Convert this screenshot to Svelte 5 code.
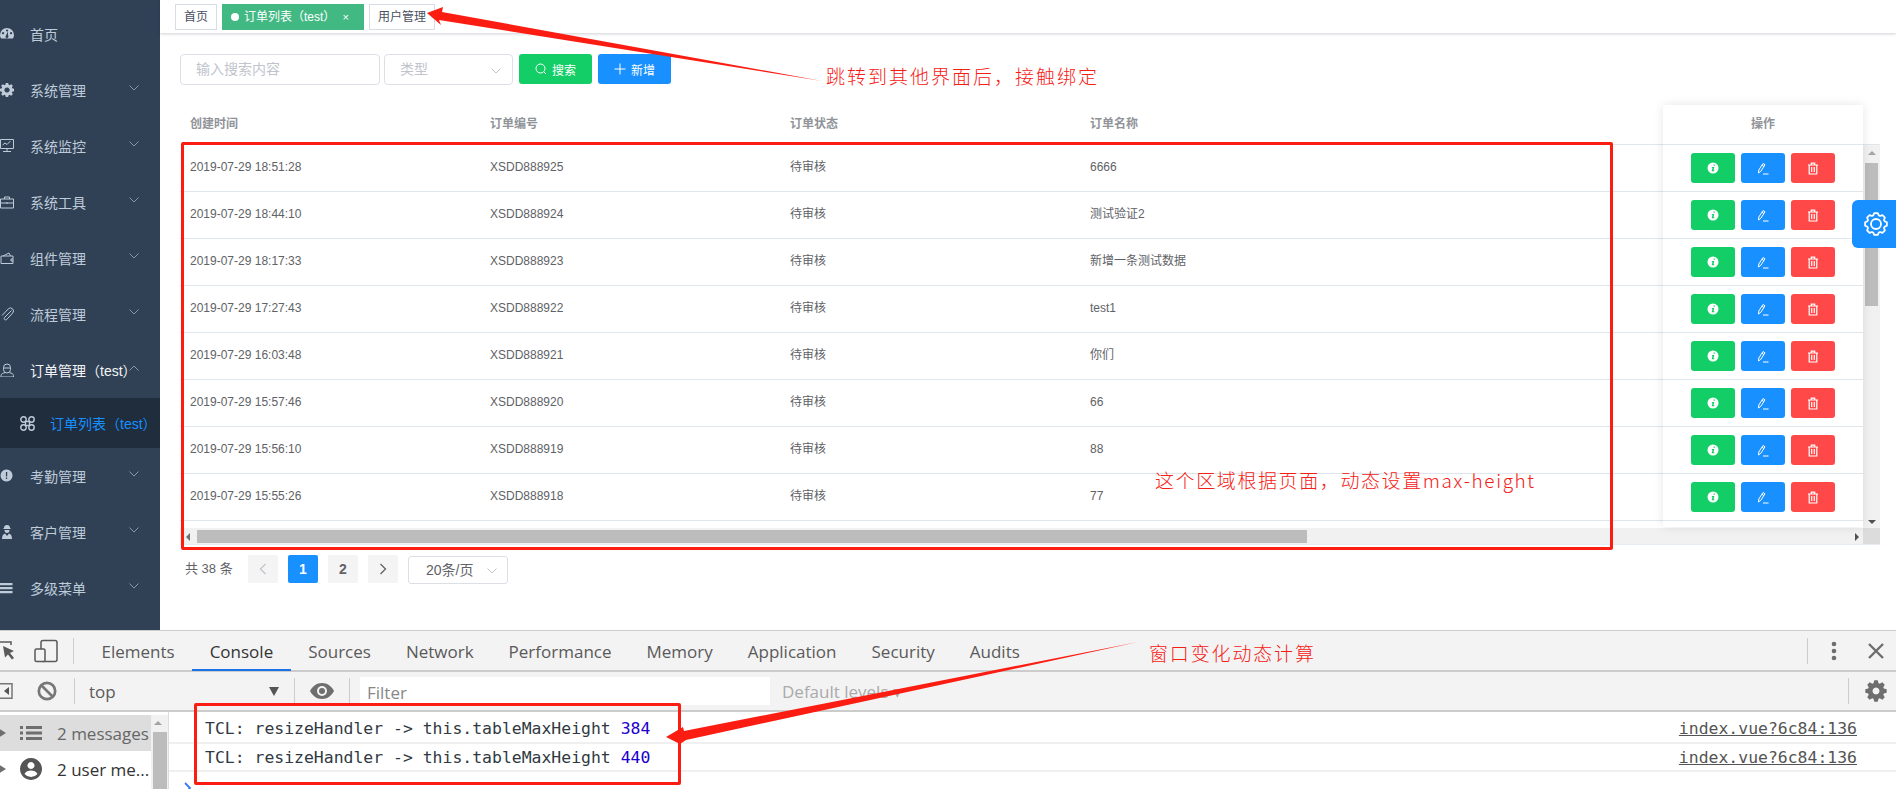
<script lang="ts">
  // Teeth are built from polar points, so one helper covers all three gears.
  function gear(cx: number, cy: number, outer: number, inner: number, teeth: number): string {
    const pts: string[] = [];
    const step = (Math.PI * 2) / teeth;
    for (let i = 0; i < teeth; i++) {
      const a = i * step - step / 2;
      for (const [off, r] of [[0.1, inner], [0.3, outer], [0.7, outer], [0.9, inner]]) {
        const t = a + off * step;
        pts.push(`${(cx + Math.cos(t) * r).toFixed(2)} ${(cy + Math.sin(t) * r).toFixed(2)}`);
      }
    }
    return "M" + pts.join("L") + "Z";
  }

  const menu = [
    { label: "首页", icon: "dash", solid: true, arrow: false },
    { label: "系统管理", icon: "gear", solid: true, arrow: true },
    { label: "系统监控", icon: "monitor", solid: false, arrow: true },
    { label: "系统工具", icon: "case", solid: false, arrow: true },
    { label: "组件管理", icon: "wallet", solid: false, arrow: true },
    { label: "流程管理", icon: "clip", solid: false, arrow: true },
    { label: "订单管理（test）", icon: "person", solid: false, arrow: true, open: true },
    { label: "考勤管理", icon: "alert", solid: true, arrow: true },
    { label: "客户管理", icon: "agent", solid: true, arrow: true },
    { label: "多级菜单", icon: "bars", solid: true, arrow: true }
  ];

  const icons: Record<string, string> = {
    dash: "M0 8a7 7 0 1 1 14 0c0 1.500-.5 2.500-1.200 3.500H1.200C.5 10.500 0 9.500 0 8ZM3 5a1.100 1.100 0 1 0 .1 0ZM7 2.400a1.100 1.100 0 1 0 .1 0ZM11 5a1.100 1.100 0 1 0 .1 0ZM7.800 4.500 6 8.500a1.500 1.500 0 1 0 2.200.3Z",
    gear: gear(7, 7, 7.2, 5.4, 8) + "M7 4.400a2.600 2.600 0 1 0 .01 0Z",
    monitor: "M.5 .5h13v9H.5ZM7 9.500v2.500M3 12.500h8M2.500 6l2.500-2 2 1.500L10.500 2",
    case: "M.5 4h13v9H.5ZM4.500 4V2h5v2M.5 8h13M7 7v2",
    wallet: "M1 5h12v7.500H1ZM3 5l6-3 1.500 3M13 8h-2v2h2",
    clip: "M11.500 3.500 4.500 10.500a1.500 1.500 0 0 0 2.100 2.100l6-6.500a3 3 0 0 0-4.300-4.200L2 8.500",
    person: "M7 1a3.500 3.500 0 0 1 3.500 3.500v2a3.500 3.500 0 0 1-7 0v-2A3.500 3.500 0 0 1 7 1ZM3.500 5h7M1 14v-1.500c0-1.500 2-2.500 4-2.800M13.500 14v-1.500c0-1.500-2-2.500-4-2.800M1 14h12.500",
    alert: "M6.500.5a6 6 0 1 0 .01 0ZM5.900 3h1.300v4.500H5.900ZM5.900 8.600h1.300v1.300H5.900Z",
    agent: "M7 0c2 0 3 1 3 3l1 1H3l1-1c0-2 1-3 3-3ZM4.500 5h5c0 2-1 3-2.500 3S4.500 7 4.500 5ZM2 14c0-3 1-5 3-5.500L7 11l2-2.500c2 .5 3 2.500 3 5.500Z",
    bars: "M0 2h12.500v2.200H0ZM0 6h12.500v2.200H0ZM0 10h12.500v2.200H0Z"
  };

  const rows = [
    ["2019-07-29 18:51:28", "XSDD888925", "待审核", "6666"],
    ["2019-07-29 18:44:10", "XSDD888924", "待审核", "测试验证2"],
    ["2019-07-29 18:17:33", "XSDD888923", "待审核", "新增一条测试数据"],
    ["2019-07-29 17:27:43", "XSDD888922", "待审核", "test1"],
    ["2019-07-29 16:03:48", "XSDD888921", "待审核", "你们"],
    ["2019-07-29 15:57:46", "XSDD888920", "待审核", "66"],
    ["2019-07-29 15:56:10", "XSDD888919", "待审核", "88"],
    ["2019-07-29 15:55:26", "XSDD888918", "待审核", "77"]
  ];

  const devTabs = ["Elements", "Console", "Sources", "Network", "Performance", "Memory", "Application", "Security", "Audits"];
  const logs = [384, 440];
</script>

{#snippet chevron(up: boolean)}
  <svg class="chev" class:up width="10" height="6" viewBox="0 0 10 6"><path d="M.5.5 5 5 9.500.5" /></svg>
{/snippet}

<div class="page">
  <div class="top">
    <aside class="sidebar">
      {#each menu as item}
        <div class="item" class:open={item.open}>
          <svg class="micon" class:solid={item.solid} width="14" height="14" viewBox="0 0 14 14"><path d={icons[item.icon]} /></svg>
          <span class="label">{item.label}</span>
          {#if item.arrow}{@render chevron(!!item.open)}{/if}
        </div>
        {#if item.open}
          <div class="sub">
            <svg class="droneicon" width="15" height="15" viewBox="0 0 15 15">
              <circle cx="3.500" cy="3.500" r="2.700" />
              <circle cx="11.500" cy="3.500" r="2.700" />
              <circle cx="3.500" cy="11.500" r="2.700" />
              <circle cx="11.500" cy="11.500" r="2.700" />
              <rect x="5.500" y="5.500" width="4" height="4" />
            </svg>
            <span>订单列表（test）</span>
          </div>
        {/if}
      {/each}
    </aside>

    <main>
      <header class="tabs">
        <span class="tab">首页</span>
        <span class="tab active"><i class="dot"></i>订单列表（test）<b class="x">×</b></span>
        <span class="tab">用户管理</span>
      </header>

      <div class="filters">
        <div class="input search">输入搜索内容</div>
        <div class="input kind">类型 {@render chevron(false)}</div>
        <button class="btn green">
          <svg width="12" height="12" viewBox="0 0 12 12"><circle cx="5.500" cy="5.500" r="4.500" /><path d="m9 9 2 2" /></svg>
          搜索
        </button>
        <button class="btn blue">
          <svg width="12" height="12" viewBox="0 0 12 12"><path d="M6 .5v11M.5 6h11" /></svg>
          新增
        </button>
      </div>

      <section class="table">
        <div class="head">
          <span>创建时间</span><span>订单编号</span><span>订单状态</span><span>订单名称</span>
        </div>
        <div class="body">
          {#each rows as r}
            <div class="row">
              {#each r as cell}<span>{cell}</span>{/each}
            </div>
          {/each}
        </div>
        <div class="hbar">
          <i class="tri left"></i>
          <div class="hthumb"></div>
          <i class="tri right"></i>
          <div class="corner"></div>
        </div>

        <div class="vbar">
          <i class="tri up"></i>
          <div class="vthumb"></div>
          <i class="tri down"></i>
        </div>

        <div class="fixed">
          <div class="fhead">操作</div>
          {#each rows as _}
            <div class="frow">
              <button class="act green" aria-label="详情">
                <svg width="12" height="12" viewBox="0 0 12 12">
                  <circle cx="6" cy="6" r="5.500" fill="#fff" />
                  <path d="M6.600 2.400h1.200v1.300H6.600ZM5 5h2.300l-.8 3.300h.9l-.2.900H4.700l.8-3.300h-.7Z" fill="#13ce66" />
                </svg>
              </button>
              <button class="act blue" aria-label="编辑">
                <svg width="12" height="13" viewBox="0 0 12 13" fill="none" stroke="#fff" stroke-width="1">
                  <path d="M1.500 11 1.800 8 6 1.500l2 1.300L3.800 9.300ZM5 3.300l2 1.300M6 12h5.500" />
                </svg>
              </button>
              <button class="act red" aria-label="删除">
                <svg width="12" height="13" viewBox="0 0 12 13" fill="none" stroke="#fff" stroke-width="1.200">
                  <path d="M1 3h10M4.300 3V1.200h3.400V3M2.200 3v9h7.600V3M4.700 5v5M7.300 5v5" />
                </svg>
              </button>
            </div>
          {/each}
        </div>
      </section>

      <nav class="pager">
        <span class="total">共 38 条</span>
        <button class="pg off" aria-label="上一页"><svg width="8" height="12" viewBox="0 0 8 12"><path d="M6.500 1 1.500 6l5 5" /></svg></button>
        <button class="pg on">1</button>
        <button class="pg">2</button>
        <button class="pg" aria-label="下一页"><svg width="8" height="12" viewBox="0 0 8 12"><path d="m1.500 1 5 5-5 5" /></svg></button>
        <div class="size">20条/页 {@render chevron(false)}</div>
      </nav>

      <button class="settings" aria-label="设置">
        <svg width="26" height="26" viewBox="0 0 26 26" fill="none" stroke="#fff" stroke-width="1.800" stroke-linejoin="round">
          <path d={gear(13, 13, 11, 9, 8)} />
          <circle cx="13" cy="13" r="5" />
        </svg>
      </button>
    </main>
  </div>

  <div class="devtools">
    <div class="dtabs">
      <svg class="dt-inspect" width="58" height="26" viewBox="0 0 58 26" fill="none" stroke="#5a5a5a">
        <path d="M-2 4h13v3M-2 17h2" stroke-width="1.500" />
        <path d="M3 8l11 5-4 2 4 5-2 1.500-4-5-3 3Z" fill="#5a5a5a" stroke="none" />
        <rect x="41" y="2.500" width="16" height="21" rx="2" stroke-width="1.500" />
        <rect x="35" y="11" width="10" height="12.500" rx="1.500" fill="#f3f3f3" stroke-width="1.500" />
      </svg>
      <i class="sep"></i>
      {#each devTabs as t}
        <span class="dtab" class:cur={t === "Console"}>{t}</span>
      {/each}
      <i class="sep far"></i>
      <svg class="dots" width="6" height="20" viewBox="0 0 6 20" fill="#6e6e6e"><circle cx="3" cy="3" r="2.300" /><circle cx="3" cy="10" r="2.300" /><circle cx="3" cy="17" r="2.300" /></svg>
      <svg class="close" width="16" height="16" viewBox="0 0 16 16" stroke="#6e6e6e" stroke-width="2.400"><path d="m1 1 14 14M15 1 1 15" /></svg>
    </div>
    <div class="dbar">
      <svg width="13" height="16" viewBox="0 0 13 16" class="panel"><path d="M-1 .8h13v14.400H-1" fill="none" stroke="#777" stroke-width="1.500" /><path d="M9 4v8L4 8Z" fill="#555" /></svg>
      <svg class="block" width="20" height="20" viewBox="0 0 20 20" fill="none" stroke="#777" stroke-width="2.700"><circle cx="10" cy="10" r="8.200" /><path d="m4.500 4.500 11 11" /></svg>
      <i class="sep"></i>
      <span class="ctx">top</span>
      <i class="caret"></i>
      <i class="sep"></i>
      <svg class="eye" width="24" height="16" viewBox="0 0 24 16"><path d="M12 0C6.500 0 2.500 3.500 0 8c2.500 4.500 6.500 8 12 8s9.500-3.500 12-8c-2.500-4.500-6.500-8-12-8Z" fill="#6e6e6e" /><circle cx="12" cy="8" r="5" fill="#f3f3f3" /><circle cx="12" cy="8" r="3" fill="#6e6e6e" /></svg>
      <i class="sep"></i>
      <div class="filter">Filter</div>
      <span class="levels">Default levels ▾</span>
      <i class="sep far"></i>
      <svg class="dgear" width="22" height="22" viewBox="0 0 22 22"><path d={gear(11, 11, 10.800, 8.200, 8) + "M11 7.500a3.500 3.500 0 1 0 .01 0Z"} fill="#6e6e6e" fill-rule="evenodd" /></svg>
    </div>
    <div class="cons">
      <div class="side">
        <div class="sitems">
          <div class="sitem hl">
            <i class="play"></i>
            <svg width="22" height="14" viewBox="0 0 22 14" fill="#6e6e6e"><path d="M0 0h3v3H0ZM6 0h16v3H6ZM0 5.500h3v3H0ZM6 5.500h16v3H6ZM0 11h3v3H0ZM6 11h16v3H6Z" /></svg>
            <span class="grey">2 messages</span>
          </div>
          <div class="sitem">
            <i class="play"></i>
            <svg width="22" height="22" viewBox="0 0 22 22" fill="#555"><path fill-rule="evenodd" d="M11 0a11 11 0 1 0 .01 0ZM11 4a3.500 3.500 0 1 1-.01 0ZM4.500 16c1-2.500 4-3.500 6.500-3.500s5.500 1 6.500 3.500a8.500 8.500 0 0 1-13 0Z" /></svg>
            <span>2 user me...</span>
          </div>
        </div>
        <div class="sscroll"><i class="tri up small"></i><div class="sthumb"></div></div>
      </div>
      <div class="log">
        {#each logs as n}
          <div class="line">
            <span>TCL: resizeHandler -> this.tableMaxHeight <em>{n}</em></span>
            <u>index.vue?6c84:136</u>
          </div>
        {/each}
        <svg class="prompt" width="8" height="12" viewBox="0 0 8 12" fill="none" stroke="#367cf1" stroke-width="1.800"><path d="m1 1 5 5-5 5" /></svg>
      </div>
    </div>
  </div>

  <!-- red annotations drawn over the screenshot -->
  <div class="mark tablebox"></div>
  <div class="mark logbox"></div>
  <svg class="arrows" width="1896" height="789" viewBox="0 0 1896 789" fill="#fb1d12">
    <polygon points="427,13 443,7 442,12 822,81 439,20 441,25" />
    <polygon points="666,737 683,727 684,731 1138,642 686,740 680,744" />
  </svg>
  <span class="note n1">跳转到其他界面后，接触绑定</span>
  <span class="note n2">这个区域根据页面，动态设置max-height</span>
  <span class="note n3">窗口变化动态计算</span>
</div>

<style>
  :global(body) {
    margin: 0;
    background: #fff;
  }
  .page {
    position: relative;
    width: 1896px;
    height: 789px;
    overflow: hidden;
    display: flex;
    flex-direction: column;
    font-family: "Liberation Sans", "Noto Sans CJK SC", sans-serif;
  }
  .top {
    height: 630px;
    display: flex;
  }
  button {
    font-family: inherit;
    border: none;
    padding: 0;
  }

  .sidebar {
    width: 160px;
    flex: none;
    padding-top: 6px;
    background: #304156;
    box-sizing: border-box;
  }
  .item {
    height: 56px;
    display: flex;
    align-items: center;
    font-size: 14px;
    color: #bfcbd9;
    position: relative;
    white-space: nowrap;
  }
  .item.open {
    color: #f4f4f5;
  }
  .micon {
    flex: none;
    margin-right: 16px;
    fill: none;
    stroke: #bfcbd9;
    stroke-width: 1;
  }
  .micon.solid {
    fill: #bfcbd9;
    fill-rule: evenodd;
    stroke: none;
  }
  .label {
    width: 100px;
  }
  .chev {
    fill: none;
    stroke: #8c96a3;
    stroke-width: 1;
    flex: none;
  }
  .chev.up {
    transform: rotate(180deg);
  }
  .item .chev {
    position: absolute;
    left: 129px;
    top: 23px;
  }
  .sub {
    height: 50px;
    display: flex;
    align-items: center;
    padding-left: 20px;
    background: #1f2d3d;
    color: #1890ff;
    font-size: 14px;
    white-space: nowrap;
    gap: 15px;
  }
  .droneicon {
    fill: none;
    stroke: #bfcbd9;
    stroke-width: 1.400;
    flex: none;
  }

  main {
    flex: 1;
    min-width: 0;
    position: relative;
  }
  .tabs {
    height: 33px;
    box-sizing: border-box;
    padding: 4px 0 0 15px;
    display: flex;
    gap: 5px;
    align-items: flex-start;
    box-shadow: 0 1px 3px rgba(0, 21, 41, 0.2);
  }
  .tab {
    height: 26px;
    box-sizing: border-box;
    border: 1px solid #d8dce5;
    padding: 0 8px;
    font-size: 12px;
    line-height: 24px;
    color: #495060;
    display: flex;
    align-items: center;
  }
  .tab.active {
    background: #42b983;
    border-color: #42b983;
    color: #fff;
    width: 142px;
  }
  .dot {
    width: 8px;
    height: 8px;
    border-radius: 50%;
    background: #fff;
    margin-right: 5px;
  }
  .x {
    font-weight: normal;
    font-size: 11px;
    margin-left: auto;
    margin-right: 6px;
  }

  .filters {
    margin: 21px 0 20px 20px;
    display: flex;
    align-items: flex-start;
    gap: 6px;
    height: 31px;
  }
  .input {
    height: 31px;
    box-sizing: border-box;
    border: 1px solid #dcdfe6;
    border-radius: 4px;
    font-size: 14px;
    line-height: 29px;
    color: #c0c4cc;
    padding-left: 15px;
  }
  .search {
    width: 200px;
    margin-right: -2px;
  }
  .kind {
    width: 129px;
    position: relative;
  }
  .kind .chev {
    position: absolute;
    right: 11px;
    top: 13px;
    stroke: #c0c4cc;
  }
  .btn {
    width: 73px;
    height: 30px;
    border-radius: 3px;
    color: #fff;
    font-size: 12px;
    display: flex;
    align-items: center;
    justify-content: center;
    gap: 5px;
  }
  .btn svg {
    fill: none;
    stroke: #fff;
    stroke-width: 1;
  }
  .green {
    background: #13ce66;
  }
  .blue {
    background: #1890ff;
  }
  .red {
    background: #ff4949;
  }

  .table {
    position: relative;
    margin: 0 16px 0 20px;
    font-size: 12px;
    color: #606266;
    border-bottom: 1px solid #e6ebf5;
  }
  .head,
  .row {
    display: grid;
    grid-template-columns: repeat(4, 300px);
    align-items: center;
    border-bottom: 1px solid #dfe6ec;
    box-sizing: border-box;
  }
  .head {
    height: 40px;
    padding-bottom: 2px;
    font-weight: bold;
    color: #909399;
  }
  .row {
    height: 47px;
    padding-bottom: 2px;
  }
  .head span,
  .row span {
    padding-left: 10px;
    line-height: 16px;
  }
  .body {
    height: 383px;
    overflow: hidden;
  }
  .hbar {
    height: 16px;
    background: #f1f1f1;
    position: relative;
    display: flex;
    align-items: center;
  }
  .hthumb {
    position: absolute;
    left: 17px;
    top: 2px;
    width: 1110px;
    height: 13px;
    background: #bcbcbc;
  }
  .corner {
    position: absolute;
    right: 0;
    top: 0;
    width: 17px;
    height: 16px;
    background: #dcdcdc;
  }
  .tri {
    position: absolute;
    width: 0;
    height: 0;
    border: 4px solid transparent;
  }
  .tri.left {
    left: 6px;
    top: 5px;
    border-left: 0;
    border-right-color: #6e6e6e;
  }
  .tri.right {
    right: 21px;
    top: 5px;
    border-right: 0;
    border-left-color: #505050;
  }
  .tri.up {
    left: 4px;
    top: 6px;
    border-top: 0;
    border-bottom-color: #a3a3a3;
  }
  .tri.down {
    left: 4px;
    bottom: 4px;
    border-bottom: 0;
    border-top-color: #505050;
  }
  .vbar {
    position: absolute;
    right: 0;
    top: 39px;
    width: 17px;
    height: 384px;
    background: #f1f1f1;
    border-top: 1px solid #dfe6ec;
    box-sizing: border-box;
  }
  .vbar .tri {
    left: 4.500px;
  }
  .vthumb {
    position: absolute;
    left: 2px;
    top: 18px;
    width: 13px;
    height: 143px;
    background: #bcbcbc;
  }
  .fixed {
    position: absolute;
    right: 17px;
    top: 0;
    width: 200px;
    height: 422px;
    overflow: hidden;
    background: #fff;
    box-shadow: 0 0 10px rgba(0, 0, 0, 0.1);
  }
  .fhead {
    height: 40px;
    box-sizing: border-box;
    border-bottom: 1px solid #dfe6ec;
    font-weight: bold;
    color: #909399;
    text-align: center;
    line-height: 38px;
  }
  .frow {
    height: 47px;
    box-sizing: border-box;
    border-bottom: 1px solid #dfe6ec;
    padding-top: 8px;
    display: flex;
    justify-content: center;
    gap: 6px;
  }
  .act {
    width: 44px;
    height: 30px;
    border-radius: 3px;
    display: flex;
    align-items: center;
    justify-content: center;
  }

  .pager {
    margin: 10px 0 0 25px;
    display: flex;
    gap: 10px;
    align-items: flex-start;
  }
  .total {
    width: 53px;
    font-size: 13px;
    line-height: 28px;
    color: #606266;
    white-space: nowrap;
  }
  .pg {
    width: 30px;
    height: 28px;
    border-radius: 2px;
    background: #f4f4f5;
    color: #606266;
    font-size: 14px;
    font-weight: bold;
    display: flex;
    align-items: center;
    justify-content: center;
  }
  .pg svg {
    fill: none;
    stroke: #606266;
    stroke-width: 1.300;
  }
  .pg.off svg {
    stroke: #c0c4cc;
  }
  .pg.on {
    background: #1890ff;
    color: #fff;
  }
  .size {
    position: relative;
    width: 100px;
    height: 28px;
    margin-top: 1px;
    box-sizing: border-box;
    border: 1px solid #dcdfe6;
    border-radius: 3px;
    font-size: 14px;
    line-height: 26px;
    color: #606266;
    padding-left: 17px;
  }
  .size .chev {
    position: absolute;
    right: 10px;
    top: 11px;
    stroke: #c0c4cc;
  }
  .settings {
    position: absolute;
    right: 0;
    top: 200px;
    width: 44px;
    height: 48px;
    padding-left: 4px;
    border-radius: 6px 0 0 6px;
    background: #1890ff;
    display: flex;
    align-items: center;
    justify-content: center;
  }

  .devtools {
    flex: 1;
    background: #fff;
    font-family: "Open Sans", "Noto Sans", sans-serif;
    color: #5a5a5a;
    display: flex;
    flex-direction: column;
    min-height: 0;
  }
  .dtabs {
    height: 40px;
    flex: none;
    box-sizing: border-box;
    background: #f3f3f3;
    border-top: 1px solid #ccc;
    display: flex;
    align-items: center;
    font-size: 17px;
    position: relative;
  }
  .dt-inspect {
    margin-right: 15px;
    flex: none;
  }
  .sep {
    width: 1px;
    height: 26px;
    background: #ccc;
    flex: none;
  }
  .dtabs .sep {
    margin-right: 10px;
  }
  .dtab {
    height: 39px;
    line-height: 41px;
    padding: 0 17.500px;
    box-sizing: border-box;
    white-space: nowrap;
  }
  .dtab.cur {
    color: #333;
    position: relative;
    padding: 0 17.500px;
  }
  .dtab.cur::after {
    content: "";
    position: absolute;
    left: 0;
    right: 0;
    bottom: -1px;
    height: 2px;
    background: #1a73e8;
  }
  .sep.far {
    margin-left: auto;
  }
  .dtabs .sep.far {
    margin-right: 23px;
  }
  .dots {
    flex: none;
    margin-right: 31px;
  }
  .close {
    flex: none;
    margin-right: 12px;
  }
  .dbar {
    height: 42px;
    flex: none;
    box-sizing: border-box;
    background: #f3f3f3;
    border-top: 2px solid #ccc;
    border-bottom: 2px solid #ccc;
    display: flex;
    align-items: center;
    font-size: 17px;
  }
  .panel {
    flex: none;
    margin-right: 24px;
  }
  .block {
    flex: none;
    margin-right: 17px;
  }
  .ctx {
    width: 194px;
    padding-left: 14px;
    box-sizing: border-box;
    color: #5a5a5a;
  }
  .caret {
    width: 0;
    height: 0;
    border: 5px solid transparent;
    border-top: 9px solid #555;
    border-bottom: 0;
    margin-right: 15px;
  }
  .eye {
    flex: none;
    margin: 0 15px;
  }
  .filter {
    width: 410px;
    height: 28px;
    line-height: 32px;
    margin-left: 10px;
    padding-left: 7px;
    box-sizing: border-box;
    background: #fff;
    color: #888;
  }
  .levels {
    margin-left: 12px;
    color: #aaa;
    white-space: nowrap;
  }
  .dbar .far {
    margin-right: 16px;
  }
  .dgear {
    flex: none;
    margin-right: 9px;
  }
  .cons {
    flex: 1;
    display: flex;
    min-height: 0;
  }
  .side {
    width: 169px;
    flex: none;
    display: flex;
    border-right: 1px solid #ddd;
    box-sizing: border-box;
    padding-top: 3px;
  }
  .sitems {
    width: 151px;
    flex: none;
  }
  .sitem {
    height: 36px;
    box-sizing: border-box;
    display: flex;
    align-items: center;
    font-size: 17px;
    color: #333;
    position: relative;
    padding-left: 20px;
    white-space: nowrap;
    gap: 15px;
  }
  .sitem svg {
    flex: none;
    width: 22px;
  }
  .sitem.hl {
    background: #ddd;
  }
  .grey {
    color: #666;
  }
  .play {
    position: absolute;
    left: -2px;
    top: 13px;
    width: 0;
    height: 0;
    border: 5px solid transparent;
    border-left: 8px solid #6e6e6e;
    border-right: 0;
  }
  .sscroll {
    position: relative;
    flex: 1;
    background: #f1f1f1;
  }
  .sscroll .small {
    left: 3px;
  }
  .sthumb {
    position: absolute;
    left: 2px;
    right: 1px;
    top: 17px;
    bottom: 0;
    background: #bcbcbc;
  }
  .log {
    flex: 1;
    position: relative;
    font-family: "DejaVu Sans Mono", "Liberation Mono", monospace;
    font-size: 16.450px;
    color: #303942;
  }
  .line {
    height: 28px;
    box-sizing: border-box;
    border-bottom: 2px solid #f0f0f0;
    display: flex;
    justify-content: space-between;
    align-items: center;
    padding: 0 39px 0 36px;
    white-space: pre;
  }
  .line:first-child {
    height: 32px;
    padding-top: 2px;
  }
  em {
    font-style: normal;
    color: #1c00cf;
  }
  u {
    color: #545454;
  }
  .prompt {
    position: absolute;
    left: 15px;
    top: 70px;
  }

  .mark {
    position: absolute;
    box-sizing: border-box;
    border: 3px solid #fb1d12;
    border-radius: 2px;
    pointer-events: none;
  }
  .tablebox {
    left: 181px;
    top: 142px;
    width: 1432px;
    height: 408px;
  }
  .logbox {
    left: 194px;
    top: 703px;
    width: 487px;
    height: 82px;
  }
  .arrows {
    position: absolute;
    left: 0;
    top: 0;
    pointer-events: none;
  }
  .note {
    position: absolute;
    font-family: "Noto Sans CJK SC", sans-serif;
    font-size: 19px;
    font-weight: 300;
    letter-spacing: 1.850px;
    line-height: 24px;
    color: #f52015;
    white-space: nowrap;
  }
  .n1 {
    left: 826px;
    top: 64px;
    letter-spacing: 2px;
  }
  .n2 {
    left: 1155px;
    top: 468px;
    letter-spacing: 1.600px;
  }
  .n3 {
    left: 1149px;
    top: 641px;
  }
</style>
